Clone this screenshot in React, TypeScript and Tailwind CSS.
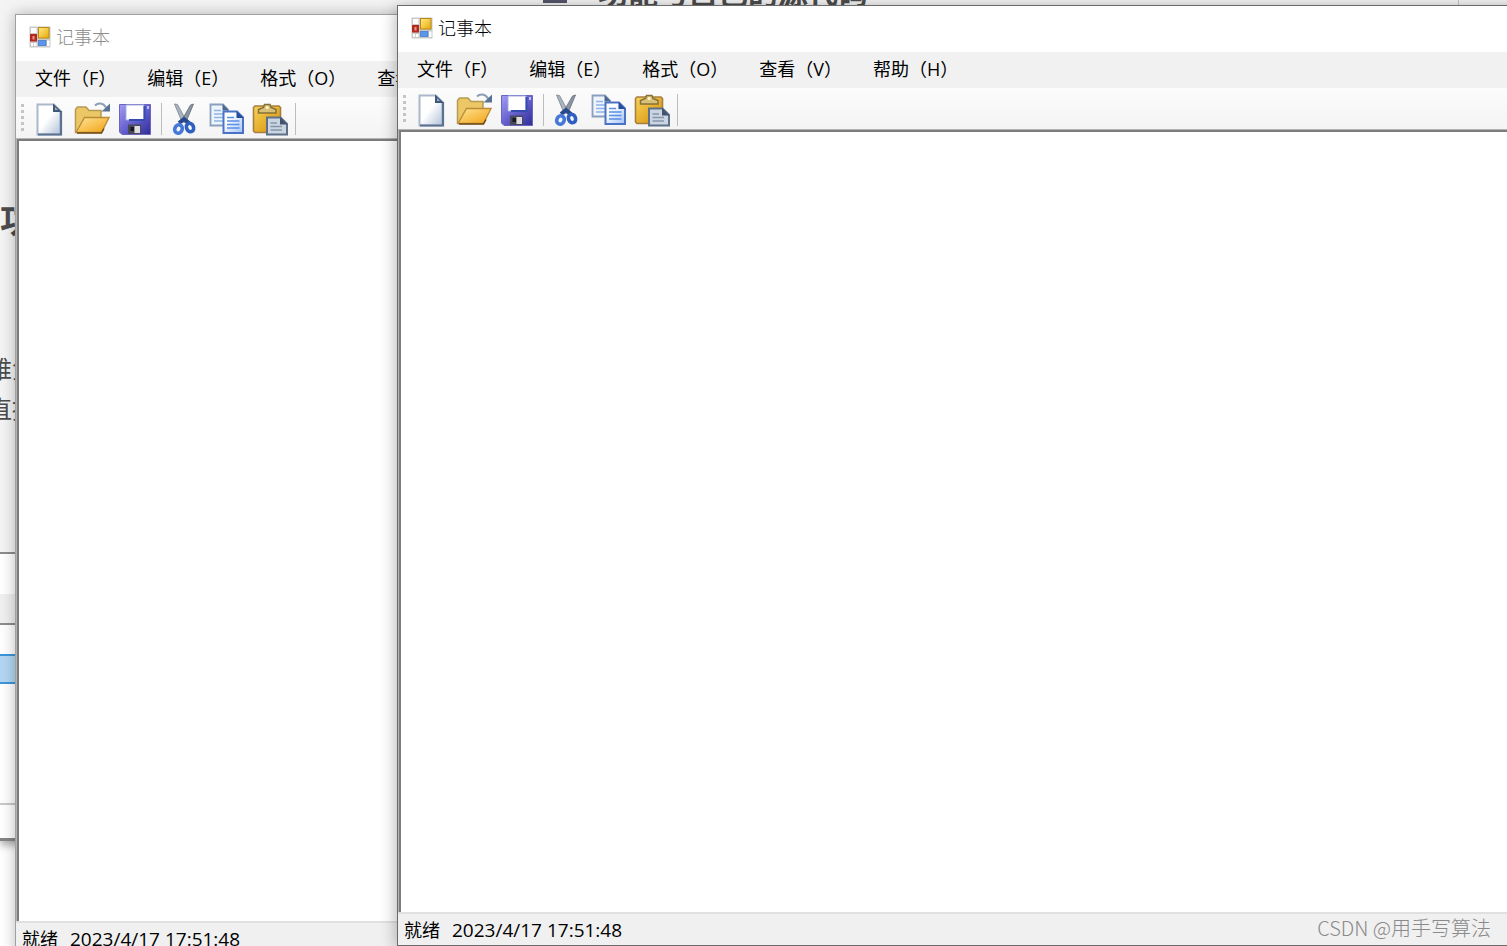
import React from "react";

const sans = "font-['Open_Sans','Noto_Sans_CJK_SC',sans-serif]";

const menus = ["文件（F）", "编辑（E）", "格式（O）", "查看（V）", "帮助（H）"];

const AppIcon = () => (
  <svg className="h-6 w-6 shrink-0" viewBox="0 0 24 24" aria-hidden="true">
    <defs>
      <linearGradient id="appGold" x1="0" y1="0" x2="1" y2="1">
        <stop offset="0" stopColor="#ffeb8a" />
        <stop offset="1" stopColor="#e9a800" />
      </linearGradient>
    </defs>
    <rect x="1.5" y="1.5" width="21" height="21" fill="#c9c9c9" />
    <rect x="3" y="3" width="5.5" height="5" fill="#fff" />
    <rect x="3" y="18" width="2.2" height="3" fill="#fff" />
    <rect x="6" y="18" width="2.5" height="3" fill="#fff" />
    <rect x="19" y="15.5" width="2.5" height="5.5" fill="#fff" />
    <rect x="2" y="9" width="7" height="7.5" fill="#b5281c" />
    <rect x="4.5" y="11" width="2" height="3.5" fill="#e89a8a" />
    <rect x="10.5" y="2.5" width="10.5" height="10.5" fill="url(#appGold)" stroke="#b98a12" />
    <rect x="10.5" y="15.5" width="7.5" height="5" fill="#5b96ea" stroke="#3e77cf" strokeWidth=".7" />
  </svg>
);

const NewIcon = () => (
  <svg className="h-9 w-9" viewBox="0 0 36 36" aria-hidden="true">
    <defs>
      <linearGradient id="sheet" x1="0" y1="0" x2="1" y2="1">
        <stop offset=".45" stopColor="#fff" />
        <stop offset="1" stopColor="#b0c1d8" />
      </linearGradient>
    </defs>
    <path d="M6.5 3.5H23L29.5 10V33.5H6.5Z" fill="url(#sheet)" stroke="#a9b8cb" strokeWidth="2" />
    <path d="M30 10V33.5H7" fill="none" stroke="#5a7190" strokeWidth="2.2" />
    <path d="M22 2.5L31 11H22Z" fill="#3f5878" />
    <path d="M24 6v3h3z" fill="#9db0c8" />
  </svg>
);

const OpenIcon = () => (
  <svg className="h-9 w-9" viewBox="0 0 36 36" aria-hidden="true">
    <defs>
      <linearGradient id="folder" x1="0" y1="0" x2="1" y2="1">
        <stop offset="0" stopColor="#ffe698" />
        <stop offset="1" stopColor="#f0a010" />
      </linearGradient>
    </defs>
    <path d="M1.5 31V8.5L3.5 6H12L15 9.5H27V31Z" fill="#ecc766" stroke="#b59a55" strokeWidth="1.5" />
    <path d="M2 31.5L10.5 16.5H35L27.5 31.5Z" fill="url(#folder)" stroke="#b98a38" strokeWidth="1.3" />
    <path d="M3 32H27.5L30 27.5" fill="none" stroke="#6d4a18" strokeWidth="1.5" />
    <path d="M21 4.5C24 1.5 29 1.5 32 6.5" fill="none" stroke="#8c9db5" strokeWidth="2" />
    <path d="M36 2.5V10.5H27.5Z" fill="#5a7394" />
  </svg>
);

const SaveIcon = () => (
  <svg className="h-9 w-9" viewBox="0 0 36 36" aria-hidden="true">
    <defs>
      <linearGradient id="disk" x1="0" y1="0" x2="1" y2="1">
        <stop offset="0" stopColor="#a39cf5" />
        <stop offset=".55" stopColor="#615bcb" />
        <stop offset="1" stopColor="#2f2c96" />
      </linearGradient>
    </defs>
    <path d="M2.5 3.5H33.5V33.5H5L2.5 31Z" fill="url(#disk)" stroke="#6a66be" />
    <path d="M9 4H27V19H9Z" fill="#fff" stroke="#a5b0e0" />
    <path d="M27.5 5V19H12" fill="none" stroke="#344bb0" strokeWidth="2" />
    <rect x="30" y="5" width="2" height="3" fill="#b5c2ff" />
    <rect x="11" y="23.5" width="13" height="9.5" fill="#4a495c" />
    <rect x="17.5" y="25" width="5.5" height="7" fill="#dcdddc" />
    <rect x="13.5" y="26" width="3.5" height="4" fill="#17171f" />
  </svg>
);

const CutIcon = () => (
  <svg className="h-9 w-9" viewBox="0 0 36 36" aria-hidden="true">
    <path d="M8.5 3L11.5 3.5L20 19L16.5 22Z" fill="#aab3bd" stroke="#8b949f" />
    <path d="M27.5 3L24.5 4L16 19L19.5 22Z" fill="#8c96a2" stroke="#717c89" />
    <path d="M13 22L18 18L23 22" fill="none" stroke="#27488c" strokeWidth="4" />
    <ellipse cx="12.5" cy="28" rx="3.7" ry="4.3" fill="#f3f6fb" stroke="#4578d8" strokeWidth="3.6" transform="rotate(25 12.5 28)" />
    <ellipse cx="24" cy="26.5" rx="3.5" ry="4.3" fill="#f3f6fb" stroke="#2f5fc0" strokeWidth="3.6" transform="rotate(-25 24 26.5)" />
  </svg>
);

const CopyIcon = () => (
  <svg className="h-9 w-9" viewBox="0 0 36 36" aria-hidden="true">
    <defs>
      <linearGradient id="copySheet" x1="0" y1="0" x2="1" y2="1">
        <stop offset=".3" stopColor="#fff" />
        <stop offset="1" stopColor="#9fc0f5" />
      </linearGradient>
    </defs>
    <path d="M1.5 3.5H14L19 8.5V24.5H1.5Z" fill="#eef4fb" stroke="#8a9fbd" strokeWidth="1.8" />
    <path d="M13.5 3L20 9.5H13.5Z" fill="#4b678f" />
    <path d="M5 9.5H12M5 13H15M5 16.5H15M5 20H15" stroke="#8fb4e6" strokeWidth="1.5" />
    <path d="M14.5 10.5H28L34 16.5V32H14.5Z" fill="url(#copySheet)" stroke="#4a73c6" strokeWidth="2" />
    <path d="M27.5 10L34.5 17H27.5Z" fill="#264c9c" />
    <path d="M18 16.5H25M18 20H30.5M18 23.5H30.5M18 27H30.5" stroke="#5a8fe8" strokeWidth="1.7" />
  </svg>
);

const PasteIcon = () => (
  <svg className="h-9 w-9" viewBox="0 0 36 36" aria-hidden="true">
    <defs>
      <linearGradient id="board" x1="0" y1="0" x2="1" y2="1">
        <stop offset="0" stopColor="#f9d35a" />
        <stop offset="1" stopColor="#d58e04" />
      </linearGradient>
    </defs>
    <path d="M1.5 6.5L3 5H27L28.5 6.5V30L27 31.5H3L1.5 30Z" fill="url(#board)" stroke="#a58040" strokeWidth="1.6" />
    <path d="M6.5 12V8.5L11.5 6.5L12.5 3.5H18L19 6.5L24 8.5V12Z" fill="#d9c277" stroke="#86703a" strokeWidth="1.5" />
    <circle cx="15.2" cy="6.5" r="1.5" fill="#fff7d0" />
    <path d="M15 16.5H28.5L35 23V33.5H15Z" fill="#cbd5e1" stroke="#5d7087" strokeWidth="2" />
    <path d="M28 16L35.5 23.5H28Z" fill="#41546c" />
    <path d="M18.5 22H25M18.5 25.5H30M18.5 29H30" stroke="#8596ab" strokeWidth="1.5" />
  </svg>
);

const fileTools = [
  { label: "新建", Icon: NewIcon },
  { label: "打开", Icon: OpenIcon },
  { label: "保存", Icon: SaveIcon },
];

const editTools = [
  { label: "剪切", Icon: CutIcon },
  { label: "复制", Icon: CopyIcon },
  { label: "粘贴", Icon: PasteIcon },
];

interface ToolGroupProps {
  tools: { label: string; Icon: React.FC }[];
}

const ToolGroup: React.FC<ToolGroupProps> = ({ tools }) => (
  <div className="flex gap-[7px]">
    {tools.map(({ label, Icon }) => (
      <button key={label} type="button" aria-label={label}>
        <Icon />
      </button>
    ))}
  </div>
);

interface NotepadWindowProps {
  active?: boolean;
  className: string;
}

const NotepadWindow: React.FC<NotepadWindowProps> = ({ active, className }) => (
  <section
    className={`absolute flex flex-col border bg-white text-lg leading-6 text-black ${
      active ? "border-[#6b6b6b]" : "border-[#a0a0a0]"
    } ${className}`}
  >
    {/* Title bar */}
    <header className="flex h-[46px] shrink-0 items-center gap-1 pb-[2px] pl-3">
      <AppIcon />
      <h2 className={`font-light ${active ? "text-black" : "text-[#8c8c8c]"}`}>记事本</h2>
    </header>

    {/* Menu */}
    <nav className="flex h-9 shrink-0 items-center gap-px bg-[#f1f1f1] pb-[2px] pl-1">
      {menus.map((menu) => (
        <button key={menu} type="button" className="px-[15px] whitespace-nowrap">
          {menu}
        </button>
      ))}
    </nav>

    {/* Toolbar */}
    <div className="flex h-[41px] shrink-0 items-center bg-linear-to-b from-[#fcfcfc] to-[#f4f4f4] pt-[3px] pl-[5px]">
      <div className="flex w-[10px] flex-col gap-[3px] pb-1">
        {[0, 1, 2, 3, 4].map((dot) => (
          <span key={dot} className="h-[3px] w-[3px] bg-[#c4c4c4]" />
        ))}
      </div>
      <ToolGroup tools={fileTools} />
      <span className="mr-1 ml-2 h-8 w-px bg-[#bdbdbd]" />
      <ToolGroup tools={editTools} />
      <span className="ml-[7px] h-8 w-px bg-[#bdbdbd]" />
    </div>

    {/* Editor */}
    <div className="flex min-h-0 flex-1 bg-[#b4b4b4] pt-px pl-px">
      <textarea
        aria-label="文本"
        className="flex-1 resize-none border-t-2 border-l-2 border-[#7c7c7c] bg-white p-1 outline-none"
      />
    </div>

    {/* Status bar */}
    <footer className="flex h-[33px] shrink-0 items-center gap-3 border-t-2 border-[#e0e0e0] bg-[#f0f0f0] pl-[6px]">
      <span>就绪</span>
      <span className="text-[19px]">2023/4/17 17:51:48</span>
    </footer>
  </section>
);

export default function App() {
  return (
    <main className={`relative h-screen overflow-hidden bg-[#f4f4f4] ${sans}`}>
      {/* Page behind the windows */}
      <article className="text-[#4d4d4d]">
        <div className="flex h-[5px] items-end overflow-hidden pr-12 pl-[543px]">
          <span className="mb-[2px] h-[3px] w-6 shrink-0 bg-[#55556b]" />
          <h1 className="ml-[31px] text-[30px] leading-6 font-bold whitespace-nowrap">功能与自己的源代码</h1>
          <span className="ml-auto h-[5px] w-px bg-[#c8c8c8]" />
        </div>
        <h2 className="mt-[195px] text-[34px] leading-10 font-bold">功能</h2>
        <p className="-ml-3 mt-[109px] text-2xl leading-10">
          难免
          <br />
          直接
        </p>
      </article>

      {/* Dialog peeking out on the left */}
      <aside className="absolute top-[552px] bottom-0 left-0 flex w-8 flex-col bg-white">
        <div className="h-[42px] border-t-2 border-[#8c8c8c]" />
        <div className="h-[31px] border-b-2 border-[#8c8c8c] bg-[#f0f0f0]" />
        <div className="mt-[29px] h-[30px] border-y-2 border-[#3c96dc] bg-[#b3d7f3]" />
        <div className="h-[121px] border-b-2 border-[#d0d0d0]" />
        <div className="h-9 border-b-3 border-[#858585] shadow-[0_4px_8px_#00000055]" />
      </aside>

      <NotepadWindow className="top-[14px] -right-4 -bottom-[9px] left-[15px] shadow-[0_0_14px_#00000045]" />
      <NotepadWindow
        active
        className="top-[5px] -right-4 bottom-0 left-[397px] shadow-[0_4px_16px_#00000055]"
      />

      <p className="absolute right-4 bottom-1 font-['Noto_Sans_CJK_SC',sans-serif] text-xl leading-7 font-light text-[#8a8a8a]">
        CSDN @用手写算法
      </p>
    </main>
  );
}
